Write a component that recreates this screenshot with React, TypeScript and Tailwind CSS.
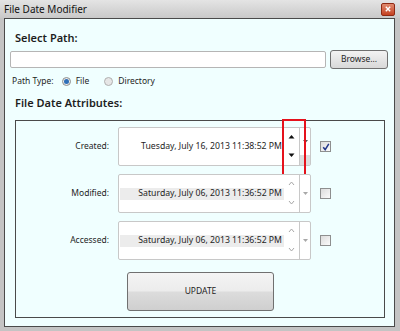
import React from 'react';

type Row = { label: string; value: string; active?: boolean; checked?: boolean };

const rows: Row[] = [
  { label: 'Created:', value: 'Tuesday, July 16, 2013 11:38:52 PM', active: true, checked: true },
  { label: 'Modified:', value: 'Saturday, July 06, 2013 11:36:52 PM' },
  { label: 'Accessed:', value: 'Saturday, July 06, 2013 11:36:52 PM' },
];

function Chevron({ up, dark }: { up?: boolean; dark?: boolean }) {
  if (dark) {
    return (
      <svg width="7" height="5" viewBox="0 0 7 5">
        <path d={up ? 'M0.5 4.5 L3.5 1 L6.5 4.5 Z' : 'M0.5 0.5 L3.5 4 L6.5 0.5 Z'} fill="#111" />
      </svg>
    );
  }
  return (
    <svg width="7" height="5" viewBox="0 0 7 5">
      <path d={up ? 'M1 4 L3.5 1 L6 4' : 'M1 1 L3.5 4 L6 1'} fill="none" stroke="#a8a8a8" strokeWidth="1" />
    </svg>
  );
}

function DatePicker({ value, active }: { value: string; active?: boolean }) {
  return (
    <div className="relative w-[193px] h-[39px] bg-white border border-[#c8c8c8] rounded-[2px] flex">
      {/* Text */}
      <div className="w-[165px] flex items-center">
        <div
          className={
            'ml-[1px] w-[164px] h-[12px] flex items-center justify-end pr-[2px] text-[8.7px] leading-none text-[#1e1e1e] ' +
            (active ? '' : 'bg-[#ececec]')
          }
        >
          {value}
        </div>
      </div>
      {/* Spinner */}
      <div className="w-[15px] flex flex-col items-center justify-between pt-[6px] pb-[7px]">
        <Chevron up dark={active} />
        <Chevron dark={active} />
      </div>
      {/* Dropdown toggle */}
      <div className="w-[11px] border-l border-[#c8c8c8] flex flex-col">
        <div className="flex-1 flex items-center justify-center">
          <svg width="5" height="3" viewBox="0 0 5 3">
            <path d="M0 0 L5 0 L2.5 3 Z" fill={active ? '#555' : '#a8a8a8'} />
          </svg>
        </div>
        {active && <div className="h-[10px] bg-[#dedede]" />}
      </div>
      {active && (
        <div className="absolute left-[163px] top-[-9px] w-[24px] h-[60px] border-2 border-[#e5121c]" />
      )}
    </div>
  );
}

function CheckBox({ checked }: { checked?: boolean }) {
  return (
    <div className="w-[11px] h-[11px] border border-[#8e8f8f] bg-gradient-to-br from-[#dcdcdc] to-[#fbfbfb] flex items-center justify-center">
      {checked && (
        <svg width="8" height="8" viewBox="0 0 8 8">
          <path d="M1.2 4.2 L3.2 6.6 L6.8 0.8" fill="none" stroke="#23378a" strokeWidth="1.5" />
        </svg>
      )}
    </div>
  );
}

export default function App() {
  return (
    <div className="w-[400px] h-[331px] bg-[#c4c4c4] flex flex-col font-['Noto_Sans',sans-serif] text-[#1e1e1e] overflow-hidden">
      {/* Title bar */}
      <div className="h-[18px] flex items-center justify-between pl-[4px] pr-[5px] bg-gradient-to-b from-[#e4e4e4] to-[#c9c9c9]">
        <span className="text-[10px] leading-none text-[#111]">File Date Modifier</span>
        <div className="w-[14px] h-[13px] rounded-[2px] border border-[#8e2a14] bg-gradient-to-b from-[#e08a6e] to-[#c4401f] flex items-center justify-center">
          <svg width="6" height="6" viewBox="0 0 6 6">
            <path d="M0.8 0.8 L5.2 5.2 M5.2 0.8 L0.8 5.2" stroke="#fff" strokeWidth="1.4" />
          </svg>
        </div>
      </div>

      {/* Client area */}
      <div className="flex-1 ml-[4px] mr-[5px] mb-[4px] border border-[#4a4a4a] bg-[#f0ffff] flex flex-col">
        <div className="mt-[10px] ml-[10px] h-[18px] leading-[18px] text-[11px] font-semibold">Select Path:</div>

        <div className="mt-[3px] ml-[5px] flex items-center">
          <div className="w-[316px] h-[17px] bg-white border border-[#b5b5b5] rounded-[2px]" />
          <button className="ml-[4px] w-[58px] h-[19px] rounded-[3px] border border-[#707070] bg-gradient-to-b from-[#f3f3f3] to-[#d8d8d8] text-[8.5px] leading-none">
            Browse...
          </button>
        </div>

        <div className="mt-[6px] ml-[7px] h-[12px] flex items-center text-[8.5px] leading-none">
          <span>Path Type:</span>
          <span className="ml-[8px] w-[9px] h-[9px] rounded-full border border-[#8e8f8f] bg-[#eaeaea] flex items-center justify-center">
            <span className="w-[5px] h-[5px] rounded-full bg-[#2f6fb8]" />
          </span>
          <span className="ml-[5px]">File</span>
          <span className="ml-[15px] w-[9px] h-[9px] rounded-full border border-[#b0b0b0] bg-[#e6e6e6]" />
          <span className="ml-[5px]">Directory</span>
        </div>

        <div className="mt-[7px] ml-[10px] h-[18px] leading-[18px] text-[11px] font-semibold">File Date Attributes:</div>

        {/* Attributes box */}
        <div className="mt-[8px] ml-[10px] w-[370px] h-[198px] border border-[#4a4a4a] flex flex-col items-start pt-[6px]">
          <div className="flex flex-col gap-[8px]">
            {rows.map((r) => (
              <div key={r.label} className="flex items-center h-[39px]">
                <div className="w-[93px] text-right text-[8.5px] leading-none">{r.label}</div>
                <div className="ml-[9px]">
                  <DatePicker value={r.value} active={r.active} />
                </div>
                <div className="ml-[9px]">
                  <CheckBox checked={r.checked} />
                </div>
              </div>
            ))}
          </div>
          <button className="mt-[12px] ml-[111px] w-[147px] h-[39px] rounded-[3px] border border-[#707070] bg-[linear-gradient(to_bottom,#f4f4f4_0%,#ececec_48%,#dcdcdc_52%,#cfcfcf_100%)] text-[8.5px] leading-none">
            UPDATE
          </button>
        </div>
      </div>
    </div>
  );
}
